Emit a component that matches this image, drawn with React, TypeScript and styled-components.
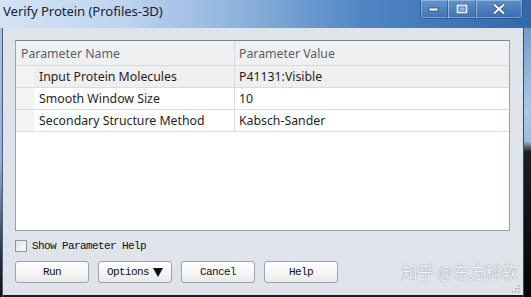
import React from "react";
import styled, { createGlobalStyle } from "styled-components";

const Global = createGlobalStyle`
  html, body { margin: 0; padding: 0; background: #1a1a1a; }
  #root { width: 531px; height: 297px; }
`;

const Window = styled.div`
  position: relative;
  width: 531px;
  height: 297px;
  display: flex;
  flex-direction: column;
  overflow: hidden;
  background: linear-gradient(90deg, #b9d0ea 0%, #9fbfe2 35%, #5f93cc 65%, #3a72b4 100%);
`;

const TitleBar = styled.div`
  height: 28px;
  flex: none;
  display: flex;
  align-items: flex-start;
  justify-content: space-between;
  background: linear-gradient(90deg, #d3e3f4 0%, #c0d6ee 22%, #8fb3dc 45%, #5086c4 68%, #3169ae 100%);
`;

const Title = styled.div`
  font-family: "Noto Sans", "Open Sans", sans-serif;
  font-size: 13.2px;
  color: #1a2433;
  padding: 2px 0 0 3px;
  line-height: 18px;
  letter-spacing: -0.1px;
`;

const CaptionGroup = styled.div`
  display: flex;
  margin-right: 8px;
  height: 18px;
  border: 1px solid rgba(40, 70, 110, 0.55);
  border-top: none;
  border-radius: 0 0 5px 5px;
  box-shadow: inset 0 0 0 1px rgba(220, 235, 250, 0.55);
  overflow: hidden;
`;

const CapBtn = styled.div<{ $w: number }>`
  width: ${(p) => p.$w}px;
  height: 100%;
  display: flex;
  align-items: center;
  justify-content: center;
  background: linear-gradient(180deg, rgba(140, 180, 225, 0.45), rgba(60, 110, 175, 0.35));
  & + & { border-left: 1px solid rgba(40, 70, 110, 0.5); box-shadow: inset 1px 0 0 rgba(220,235,250,0.5); }
`;

const Body = styled.div`
  flex: 1;
  display: flex;
  min-height: 0;
`;

const LeftFrame = styled.div`
  width: 3px;
  flex: none;
  background: linear-gradient(180deg, #a8c2e0 0%, #8fb0d6 50%, #2a2f38 85%, #111 100%);
  box-shadow: inset -1px 0 0 #4d5f78;
`;

const RightFrame = styled.div`
  width: 8px;
  flex: none;
  background: linear-gradient(180deg, #6f9fd2 0%, #a9c8e8 30%, #9cbde0 42%, #1b1e24 46%, #050505 100%);
  box-shadow: inset 1px 0 0 #3d4a5c;
`;

const Client = styled.div`
  flex: 1;
  background: #dfe3ea;
  display: flex;
  flex-direction: column;
  padding: 12px 13px 0 12px;
  border-bottom: 2px solid #1c1f24;
`;

const Table = styled.div`
  height: 189px;
  flex: none;
  background: #fff;
  border: 1px solid #9aa0a8;
  border-top-color: #7d848d;
  display: flex;
  flex-direction: column;
`;

const Row = styled.div<{ $header?: boolean; $shade?: boolean }>`
  display: grid;
  grid-template-columns: 219px 1fr;
  height: ${(p) => (p.$header ? 24 : 21)}px;
  border-bottom: 1px solid #d9dcdf;
  background: ${(p) => (p.$header ? "#eff0f1" : p.$shade ? "#efefef" : "#fff")};
  font-family: "Noto Sans", "Open Sans", sans-serif;
  font-size: 12.3px;
  color: ${(p) => (p.$header ? "#5a5f66" : "#1e1e1e")};
`;

const Cell = styled.div<{ $indent?: boolean; $first?: boolean; $header?: boolean }>`
  display: flex;
  align-items: center;
  padding-left: ${(p) => (p.$header ? (p.$first ? 5 : 4) : p.$first ? 23 : 4)}px;
  border-right: ${(p) => (p.$first ? "1px solid #d9dcdf" : "none")};
  background: ${(p) =>
    p.$indent ? "linear-gradient(90deg, #f3f3f3 0, #f3f3f3 18px, transparent 18px)" : "transparent"};
  white-space: nowrap;
`;

const CheckRow = styled.label`
  display: flex;
  align-items: center;
  gap: 5px;
  margin-top: 8px;
  height: 13px;
  font-family: "Liberation Mono", monospace;
  font-size: 11px;
  letter-spacing: -0.6px;
  color: #111;
`;

const Box = styled.span`
  width: 10px;
  height: 10px;
  border: 1px solid #8e949b;
  background: linear-gradient(135deg, #e2e5e8, #fafafa);
`;

const Buttons = styled.div`
  display: flex;
  gap: 9px;
  margin-top: 9px;
`;

const Button = styled.div`
  width: 72px;
  height: 20px;
  border: 1px solid #9da3aa;
  border-radius: 3px;
  background: linear-gradient(180deg, #ffffff 0%, #f6f6f6 50%, #e9e9e9 100%);
  display: flex;
  align-items: center;
  justify-content: center;
  gap: 4px;
  font-family: "Liberation Mono", monospace;
  font-size: 11px;
  letter-spacing: -0.6px;
  color: #111;
`;

const Watermark = styled.div`
  position: absolute;
  right: 13px;
  bottom: 14px;
  font-family: "Noto Sans CJK SC", sans-serif;
  font-size: 15.8px;
  color: rgba(255, 255, 255, 0.92);
  text-shadow: 0 0 1px rgba(120, 130, 145, 0.85), 0 0 2px rgba(150, 160, 175, 0.5);
  letter-spacing: 0.4px;
`;

const Grip = styled.svg`
  position: absolute;
  right: 11px;
  bottom: 4px;
`;

const rows = [
  { name: "Input Protein Molecules", value: "P41131:Visible", shade: true },
  { name: "Smooth Window Size", value: "10" },
  { name: "Secondary Structure Method", value: "Kabsch-Sander" },
];

export default function App() {
  return (
    <>
      <Global />
      <Window>
        <TitleBar>
          <Title>Verify Protein (Profiles-3D)</Title>
          <CaptionGroup>
            <CapBtn $w={26}>
              <svg width="12" height="6" viewBox="0 0 12 6">
                <rect x="1" y="2" width="9" height="3" fill="#fff" stroke="#3a4c66" strokeWidth="0.8" />
              </svg>
            </CapBtn>
            <CapBtn $w={27}>
              <svg width="12" height="10" viewBox="0 0 12 10">
                <rect x="1.5" y="1.5" width="9" height="7" fill="none" stroke="#e8f0fa" strokeWidth="1.6" />
                <rect x="3.5" y="3.5" width="5" height="3" fill="#9bb8da" />
              </svg>
            </CapBtn>
            <CapBtn $w={46}>
              <svg width="14" height="12" viewBox="0 0 14 12">
                <path d="M2 1.5 L12 10.5 M12 1.5 L2 10.5" stroke="#3a4c66" strokeWidth="3.4" />
                <path d="M2 1.5 L12 10.5 M12 1.5 L2 10.5" stroke="#fff" strokeWidth="2" />
              </svg>
            </CapBtn>
          </CaptionGroup>
        </TitleBar>
        <Body>
          <LeftFrame />
          <Client>
            <Table>
              <Row $header>
                <Cell $first $header>Parameter Name</Cell>
                <Cell $header>Parameter Value</Cell>
              </Row>
              {rows.map((r) => (
                <Row key={r.name} $shade={r.shade}>
                  <Cell $first $indent>{r.name}</Cell>
                  <Cell>{r.value}</Cell>
                </Row>
              ))}
            </Table>
            <CheckRow>
              <Box />
              Show Parameter Help
            </CheckRow>
            <Buttons>
              <Button>Run</Button>
              <Button>
                Options
                <svg width="10" height="9" viewBox="0 0 10 9">
                  <path d="M0 0 H10 L5 9 Z" fill="#111" />
                </svg>
              </Button>
              <Button>Cancel</Button>
              <Button>Help</Button>
            </Buttons>
          </Client>
          <RightFrame />
        </Body>
        <Watermark>知乎 @东方科软</Watermark>
        <Grip width="9" height="9" viewBox="0 0 9 9">
          {[
            [7, 1],
            [7, 4],
            [4, 4],
            [7, 7],
            [4, 7],
            [1, 7],
          ].map(([x, y]) => (
            <rect key={`${x}-${y}`} x={x} y={y} width="1.5" height="1.5" fill="#a9b0ba" />
          ))}
        </Grip>
      </Window>
    </>
  );
}
